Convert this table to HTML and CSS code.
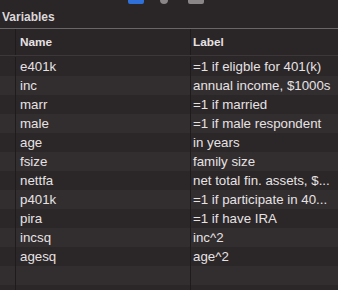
FILE: index.html
```html
<!DOCTYPE html>
<html>
<head>
<meta charset="utf-8">
<link rel="stylesheet" href="styles.css">
</head>
<body>
<div class="toolbar">
  <span class="tb-icon blue"></span>
  <span class="tb-icon gray small"></span>
  <span class="tb-icon gray wide"></span>
</div>
<div class="title">Variables</div>
<div class="table">
  <div class="row head"><div class="c0"></div><div class="c1">Name</div><div class="c2">Label</div></div>
  <div class="row"><div class="c0"></div><div class="c1">e401k</div><div class="c2">=1 if eligble for 401(k)</div></div>
  <div class="row"><div class="c0"></div><div class="c1">inc</div><div class="c2">annual income, $1000s</div></div>
  <div class="row"><div class="c0"></div><div class="c1">marr</div><div class="c2">=1 if married</div></div>
  <div class="row"><div class="c0"></div><div class="c1">male</div><div class="c2">=1 if male respondent</div></div>
  <div class="row"><div class="c0"></div><div class="c1">age</div><div class="c2">in years</div></div>
  <div class="row"><div class="c0"></div><div class="c1">fsize</div><div class="c2">family size</div></div>
  <div class="row"><div class="c0"></div><div class="c1">nettfa</div><div class="c2">net total fin. assets, $...</div></div>
  <div class="row"><div class="c0"></div><div class="c1">p401k</div><div class="c2">=1 if participate in 40...</div></div>
  <div class="row"><div class="c0"></div><div class="c1">pira</div><div class="c2">=1 if have IRA</div></div>
  <div class="row"><div class="c0"></div><div class="c1">incsq</div><div class="c2">inc^2</div></div>
  <div class="row"><div class="c0"></div><div class="c1">agesq</div><div class="c2">age^2</div></div>
  <div class="row"><div class="c0"></div><div class="c1"></div><div class="c2"></div></div>
  <div class="row"><div class="c0"></div><div class="c1"></div><div class="c2"></div></div>
</div>
</body>
</html>
```
FILE: styles.css
```css
html, body {
  margin: 0;
  padding: 0;
  background: #2a2527;
  width: 338px;
  height: 290px;
  overflow: hidden;
  font-family: "Liberation Sans", Arial, sans-serif;
  color: #e6e2e3;
}
.toolbar {
  height: 6px;
  display: flex;
  align-items: flex-end;
  padding-left: 128px;
  gap: 16px;
  overflow: hidden;
}
.tb-icon {
  display: block;
  height: 8px;
  margin-bottom: 2px;
  border-radius: 2px;
}
.tb-icon.blue { width: 16px; background: #2f6fd8; }
.tb-icon.gray.small { width: 8px; background: #8a8688; border-radius: 4px; }
.tb-icon.gray.wide { width: 16px; background: #8a8688; margin-left: 4px; }
.title {
  height: 22px;
  line-height: 22px;
  padding-left: 2px;
  font-weight: bold;
  font-size: 12px;
  color: #dcd8d9;
  border-bottom: 1px solid #6a6567;
}
.table {
  display: flex;
  flex-direction: column;
}
.row {
  display: grid;
  grid-template-columns: 15px 175px 1fr;
  height: 19px;
  line-height: 20px;
  font-size: 13.3px;
}
.row:nth-child(even) { background: #2b2628; }
.row:nth-child(odd) { background: #322d2f; }
.row.head {
  height: 26px;
  line-height: 26px;
  background: #2a2527;
  font-weight: bold;
  font-size: 11.8px;
  border-bottom: 1px solid #3d3739;
  margin-bottom: 1px;
}
.c1, .c2 {
  border-left: 1px solid #1f1b1c;
  padding-left: 4px;
  white-space: nowrap;
  overflow: hidden;
}
.c2 { padding-left: 2px; }
```
